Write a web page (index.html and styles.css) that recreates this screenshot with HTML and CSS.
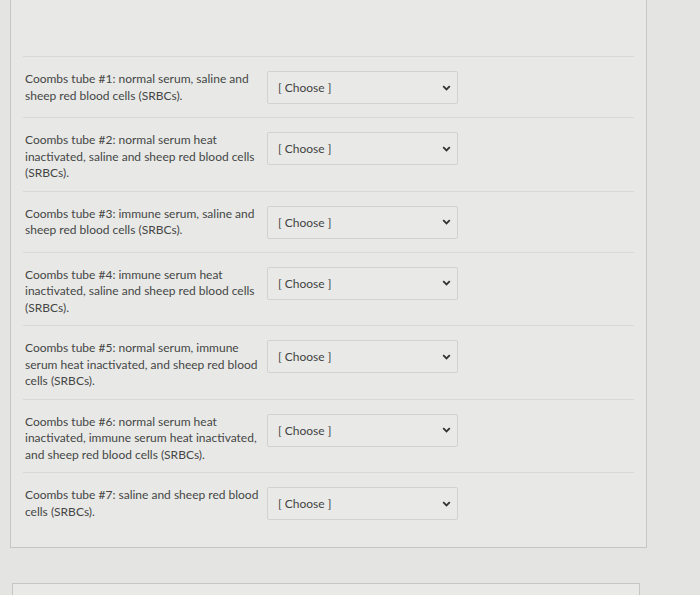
FILE: index.html
```html
<!DOCTYPE html>
<html>
<head>
<meta charset="utf-8">
<link rel="stylesheet" href="styles.css">
</head>
<body>
<div class="card">
  <div class="row">
    <div class="label">Coombs tube #1: normal serum, saline and sheep red blood cells (SRBCs).</div>
    <div class="select"><span>[ Choose ]</span><svg width="9" height="6" viewBox="0 0 9 6"><path d="M1.2 1.2l3.3 3.3 3.3-3.3" fill="none" stroke="#333" stroke-width="1.8"/></svg></div>
  </div>
  <div class="row">
    <div class="label">Coombs tube #2: normal serum heat inactivated, saline and sheep red blood cells (SRBCs).</div>
    <div class="select"><span>[ Choose ]</span><svg width="9" height="6" viewBox="0 0 9 6"><path d="M1.2 1.2l3.3 3.3 3.3-3.3" fill="none" stroke="#333" stroke-width="1.8"/></svg></div>
  </div>
  <div class="row">
    <div class="label">Coombs tube #3: immune serum, saline and sheep red blood cells (SRBCs).</div>
    <div class="select"><span>[ Choose ]</span><svg width="9" height="6" viewBox="0 0 9 6"><path d="M1.2 1.2l3.3 3.3 3.3-3.3" fill="none" stroke="#333" stroke-width="1.8"/></svg></div>
  </div>
  <div class="row">
    <div class="label">Coombs tube #4: immune serum heat inactivated, saline and sheep red blood cells (SRBCs).</div>
    <div class="select"><span>[ Choose ]</span><svg width="9" height="6" viewBox="0 0 9 6"><path d="M1.2 1.2l3.3 3.3 3.3-3.3" fill="none" stroke="#333" stroke-width="1.8"/></svg></div>
  </div>
  <div class="row">
    <div class="label">Coombs tube #5: normal serum, immune serum heat inactivated, and sheep red blood cells (SRBCs).</div>
    <div class="select"><span>[ Choose ]</span><svg width="9" height="6" viewBox="0 0 9 6"><path d="M1.2 1.2l3.3 3.3 3.3-3.3" fill="none" stroke="#333" stroke-width="1.8"/></svg></div>
  </div>
  <div class="row">
    <div class="label">Coombs tube #6: normal serum heat inactivated, immune serum heat inactivated, and sheep red blood cells (SRBCs).</div>
    <div class="select"><span>[ Choose ]</span><svg width="9" height="6" viewBox="0 0 9 6"><path d="M1.2 1.2l3.3 3.3 3.3-3.3" fill="none" stroke="#333" stroke-width="1.8"/></svg></div>
  </div>
  <div class="row">
    <div class="label">Coombs tube #7: saline and sheep red blood cells (SRBCs).</div>
    <div class="select"><span>[ Choose ]</span><svg width="9" height="6" viewBox="0 0 9 6"><path d="M1.2 1.2l3.3 3.3 3.3-3.3" fill="none" stroke="#333" stroke-width="1.8"/></svg></div>
  </div>
</div>
<div class="card next"></div>
</body>
</html>
```
FILE: styles.css
```css
html, body {
  margin: 0;
  padding: 0;
  background: #e4e5e3;
  font-family: Lato, "Open Sans", sans-serif;
  overflow: hidden;
}
.card {
  margin-left: 10px;
  width: 637px;
  background: #e8e9e7;
  border: 1px solid #c6c7c5;
  border-top: none;
  padding: 56px 12px 14px;
  box-sizing: border-box;
}
.row {
  display: flex;
  gap: 6px;
  padding: 14px 2px 9px;
  border-top: 1px solid #d9dad8;
}
.label {
  width: 236px;
  font-size: 12px;
  line-height: 16.5px;
  color: #454645;
}
.select {
  width: 191px;
  height: 33px;
  margin-bottom: 4px;
  box-sizing: border-box;
  border: 1px solid #d2d3d1;
  border-radius: 2px;
  background: #e9eae8;
  display: flex;
  align-items: center;
  justify-content: space-between;
  padding: 0 6px 0 10px;
  font-size: 12px;
  color: #424342;
}
.next {
  margin-top: 35px;
  margin-left: 12px;
  width: 628px;
  height: 12px;
  border-top: 1px solid #c6c7c5;
  border-bottom: none;
  padding: 0;
  background: #e9eae8;
}
```
